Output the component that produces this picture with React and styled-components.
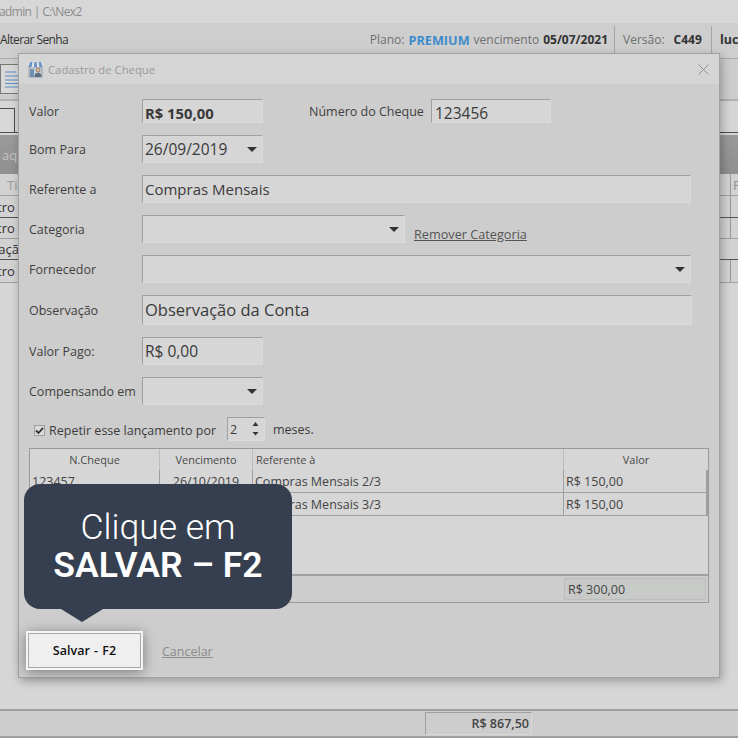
import React from 'react'
import styled, { createGlobalStyle } from 'styled-components'

const Global = createGlobalStyle`
  html, body { margin: 0; padding: 0; background: #d6d6d6; }
  * { box-sizing: border-box; }
`

const Screen = styled.div`
  position: relative;
  width: 738px;
  height: 738px;
  overflow: hidden;
  display: flex;
  flex-direction: column;
  background: #d6d6d6;
  font-family: "Open Sans", "Noto Sans", sans-serif;
  font-size: 13px;
  color: #3c3c3c;
`

const TitleBar = styled.div`
  height: 23px;
  flex: none;
  display: flex;
  align-items: center;
  margin-left: -1px;
  font-size: 12px;
  letter-spacing: -0.65px;
  color: #8c8c8c;
  background: #d7d7d7;
`

const MenuBar = styled.div`
  height: 36px;
  flex: none;
  display: flex;
  align-items: center;
  padding-bottom: 2px;
  background: #cecece;
  border-bottom: 1px solid #a9a9a9;
  white-space: nowrap;
`

const MenuItem = styled.div`
  font-size: 12px;
  letter-spacing: -0.6px;
  color: #333;
`

const PlanInfo = styled.div`
  margin-left: auto;
  height: 27px;
  display: flex;
  align-items: center;
  gap: 4px;
  padding-right: 6px;
  font-size: 12px;
  color: #6e6e6e;
  border-right: 1px solid #a5a5a5;
`

const Strong = styled.b`
  color: ${p => p.$color || '#333'};
  font-size: ${p => p.$size || 12}px;
  font-weight: 700;
`

const VersionInfo = styled(PlanInfo)`
  margin-left: 0;
  width: 97px;
  padding: 0 0 0 8px;
  gap: 9px;
`

const UserInfo = styled.div`
  width: 26px;
  overflow: hidden;
  padding-left: 8px;
  font-size: 12.5px;
  font-weight: 700;
  color: #333;
`

const ToolBar = styled.div`
  height: 42px;
  flex: none;
  display: flex;
  align-items: center;
  background: #cdcdcd;
  border-bottom: 2px solid #b0b0b0;
`

const ToolButton = styled.div`
  width: 30px;
  height: 30px;
  display: flex;
  align-items: center;
  padding-left: 3px;
  background: #d8d8d8;
  border: 1px solid #777;
`

const TabStrip = styled.div`
  height: 32px;
  flex: none;
  padding-top: 7px;
  background: #d6d6d6;
  border-bottom: 1px solid #4c4c4c;
`

const Tab = styled.div`
  width: 15px;
  height: 24px;
  border: 1px solid #4c4c4c;
  border-left: 0;
  border-bottom: 0;
  background: #d8d8d8;
`

const GridTitle = styled.div`
  height: 39px;
  flex: none;
  margin-top: 2px;
  display: flex;
  align-items: center;
  padding-left: 2px;
  font-size: 13px;
  color: #c4c4c4;
  background: linear-gradient(#9a9a9a, #8f8f8f);
`

const GridRow = styled.div`
  height: ${p => p.$h || 21}px;
  flex: none;
  display: grid;
  grid-template-columns: 60px 1fr 8px;
  background: #d2d2d2;
  border-bottom: 1px solid ${p => (p.$dark ? '#555' : '#a0a0a0')};
`

const ClipCell = styled.div`
  display: flex;
  align-items: center;
  overflow: visible;
  white-space: nowrap;
  margin-left: ${p => p.$offset || 0}px;
  font-size: 13px;
  color: ${p => (p.$muted ? '#9a9a9a' : '#333')};
`

const EndCell = styled.div`
  grid-column: 3;
  display: flex;
  align-items: center;
  padding-left: 2px;
  font-size: 13px;
  color: #8f8f8f;
  border-left: ${p => (p.$none ? 0 : '1px solid #999')};
`

const Desktop = styled.div`
  flex: 1;
`

const StatusBar = styled.div`
  height: 29px;
  flex: none;
  padding-left: 425px;
  background: #cdcdcd;
  border-top: 2px solid #a0a0a0;
  border-bottom: 2px solid #a0a0a0;
`

const StatusCell = styled.div`
  width: 107px;
  height: 23px;
  margin-top: 1px;
  padding-right: 2px;
  display: flex;
  align-items: center;
  justify-content: flex-end;
  font-size: 12.5px;
  font-weight: 600;
  color: #444;
  border: 1px solid #d8d8d8;
  border-top-color: #a0a0a0;
  border-left-color: #a0a0a0;
`

const Dialog = styled.div`
  position: absolute;
  left: 18px;
  top: 53px;
  width: 702px;
  height: 625px;
  display: flex;
  flex-direction: column;
  background: #cdcdcd;
  border: 1px solid #a3a3a3;
  box-shadow: 2px 3px 9px rgba(0, 0, 0, 0.28);
`

const DialogHead = styled.div`
  height: 30px;
  flex: none;
  display: flex;
  align-items: center;
  gap: 4px;
  padding: 0 10px 0 8px;
  background: #d5d5d5;
  font-size: 11.3px;
  color: #9a9a9a;
`

const CloseBtn = styled.svg`
  margin-left: auto;
  width: 11px;
  height: 11px;
`

const DialogBody = styled.div`
  flex: 1;
  display: flex;
  flex-direction: column;
  padding: 15px 10px 0;
`

const Fields = styled.div`
  display: flex;
  flex-direction: column;
  gap: 12px;
`

const Row = styled.div`
  height: ${p => p.$h}px;
  display: flex;
  align-items: center;
`

const Label = styled.div`
  width: ${p => p.$w || 113}px;
  margin-left: ${p => p.$gap || 0}px;
  flex: none;
  font-size: 12.5px;
  white-space: nowrap;
  color: #3f3f3f;
`

const Field = styled.div`
  width: ${p => p.$w}px;
  height: 100%;
  flex: none;
  display: flex;
  align-items: center;
  justify-content: space-between;
  padding: ${p => p.$top || 0}px 5px 0 ${p => p.$pad || 2}px;
  font-size: ${p => p.$size || 15.5}px;
  font-weight: ${p => (p.$bold ? 700 : 400)};
  color: #3a3a3a;
  background: #d6d6d6;
  border: 1px solid #dcdcdc;
  border-top: 1px solid #a0a0a0;
  border-left: 1px solid #a0a0a0;
`

const ObservationField = styled(Field)`
  padding-bottom: 2px;
`

const Caret = styled.span`
  width: 0;
  height: 0;
  border-left: 5px solid transparent;
  border-right: 5px solid transparent;
  border-top: 5px solid #333;
`

const RemoveLink = styled.a`
  margin: 9px 0 0 9px;
  font-size: 12.7px;
  color: #555;
  text-decoration: underline;
  white-space: nowrap;
`

const CancelLink = styled.a`
  margin-top: 2px;
  font-size: 12.5px;
  color: #8b8b8b;
  text-decoration: underline;
`

const RepeatBlock = styled.div`
  margin-top: 12px;
  display: flex;
  flex-direction: column;
  gap: 7px;
`

const RepeatRow = styled.div`
  height: 24px;
  display: flex;
  align-items: center;
  padding-left: 5px;
  font-size: 12.5px;
`

const RepeatText = styled.span`
  margin-top: 2px;
`

const Check = styled.span`
  width: 11px;
  height: 11px;
  flex: none;
  margin: 2px 4px 0 0;
  display: flex;
  align-items: center;
  justify-content: center;
  background: #dadada;
  border: 1px solid #a0a0a0;
`

const Spinner = styled.div`
  width: 38px;
  height: 24px;
  margin: 0 8px 0 11px;
  display: flex;
  align-items: center;
  justify-content: space-between;
  padding: 0 5px 0 2px;
  font-size: 12.5px;
  background: #d6d6d6;
  border: 1px solid #dcdcdc;
  border-top-color: #a0a0a0;
  border-left-color: #a0a0a0;
`

const Table = styled.div`
  width: 680px;
  height: 155px;
  display: flex;
  flex-direction: column;
  background: #d6d6d6;
  border: 1px solid #999;
`

const TableRow = styled.div`
  height: ${p => p.$h}px;
  flex: none;
  display: grid;
  grid-template-columns: 130px 93px 311px 1fr;
  border-bottom: ${p => (p.$line ? '1px solid #a0a0a0' : 0)};
`

const Th = styled.div`
  display: flex;
  align-items: center;
  justify-content: ${p => (p.$left ? 'flex-start' : 'center')};
  padding-left: ${p => (p.$left ? 3 : 0)}px;
  font-size: 11px;
  color: #4a4a4a;
  border-right: 1px solid #bdbdbd;
  &:last-child { border-right: 0; }
`

const Td = styled.div`
  display: flex;
  align-items: center;
  justify-content: ${p => (p.$center ? 'center' : 'flex-start')};
  padding-left: ${p => (p.$center ? 0 : 2)}px;
  font-size: 12.5px;
  color: #444;
  border-right: 1px solid #a0a0a0;
  &:last-child { border-right: 2px solid #a0a0a0; }
`

const TableEmpty = styled.div`
  flex: 1;
`

const TableFoot = styled.div`
  height: 28px;
  flex: none;
  display: flex;
  justify-content: flex-end;
  padding: 2px 2px 2px 0;
  background: #cdcdcd;
  border-top: 2px solid #a0a0a0;
`

const Total = styled.div`
  width: 142px;
  display: flex;
  align-items: center;
  padding-left: 3px;
  font-size: 12.5px;
  color: #444;
  background: #c8cac8;
  border: 1px solid #bdbdbd;
`

const Actions = styled.div`
  margin: 28px 0 0 -3px;
  display: flex;
  align-items: center;
  gap: 19px;
`

const SaveButton = styled.div`
  width: 117px;
  height: 39px;
  display: flex;
  align-items: center;
  justify-content: center;
  font-size: 12.5px;
  font-weight: 600;
  word-spacing: 1px;
  color: #111;
  background: #efefef;
  border: 3px solid #f6f6f6;
  outline: 1px solid #a8a8a8;
  outline-offset: -3px;
  box-shadow: 0 2px 12px rgba(0, 0, 0, 0.4);
`

const Callout = styled.div`
  position: absolute;
  left: 24px;
  top: 484px;
  width: 268px;
  height: 125px;
  display: flex;
  flex-direction: column;
  align-items: center;
  justify-content: center;
  padding-bottom: 2px;
  background: #363f4f;
  border-radius: 16px;
  color: #fff;
  font-family: Roboto, "Open Sans", sans-serif;
  font-size: 35.5px;
  line-height: 38px;
  &::after {
    content: "";
    position: absolute;
    left: 37px;
    top: 100%;
    border-left: 21px solid transparent;
    border-right: 21px solid transparent;
    border-top: 13px solid #363f4f;
  }
`

const CalloutLight = styled.div`
  font-weight: 300;
`

const CalloutBold = styled.div`
  font-weight: 600;
`

const StoreIcon = () => (
  <svg width="17" height="17" viewBox="0 0 17 17">
    <rect x="2" y="6" width="13" height="10" fill="#c9ced6" stroke="#7c8796" strokeWidth="0.7" />
    <path d="M2 1h13l1.500 5H.5z" fill="#e4e4e4" />
    <path d="M3 1h2.400L4.600 6H1.400zM7.300 1h2.400l.4 5H6.900zM11.600 1H14l1.600 5h-3.200z" fill="#6a94c9" />
    <rect x="3" y="8" width="4" height="8" fill="#6f8fb2" />
    <circle cx="11" cy="9" r="2" fill="#d9b48f" stroke="#555" strokeWidth="0.5" />
    <path d="M7.500 16c0-3 1.500-4.300 3.500-4.300s3.500 1.300 3.500 4.300z" fill="#5b6b80" />
  </svg>
)

const NotesIcon = () => (
  <svg width="22" height="18" viewBox="0 0 22 18" fill="none" stroke="#5c8cc4" strokeWidth="1.2">
    <path d="M1 2h11M1 6h13M1 10h15M1 13.500h15M1 17h15" />
    <path d="M14 6l5-4" stroke="#666" strokeWidth="2" />
  </svg>
)

const CheckMark = () => (
  <svg width="9" height="9" viewBox="0 0 9 9" fill="none" stroke="#333" strokeWidth="1.8">
    <path d="M1 4.500l2.500 2.500L8 1.800" />
  </svg>
)

const SpinArrows = () => (
  <svg width="7" height="16" viewBox="0 0 7 16" fill="#333">
    <path d="M3.500 1L6.500 5H.5zM.5 11h6l-3 3.500z" />
  </svg>
)

const installments = [
  { num: '123457', date: '26/10/2019', ref: 'Compras Mensais 2/3', value: 'R$ 150,00' },
  { num: '123458', date: '26/11/2019', ref: 'Compras Mensais 3/3', value: 'R$ 150,00' },
]

export default function App() {
  return (
    <Screen>
      <Global />
      <TitleBar>admin | C:\Nex2</TitleBar>
      <MenuBar>
        <MenuItem>Alterar Senha</MenuItem>
        <PlanInfo>
          Plano: <Strong $color="#3f8ccb" $size={12.7}>PREMIUM</Strong> vencimento <Strong>05/07/2021</Strong>
        </PlanInfo>
        <VersionInfo>
          Versão: <Strong>C449</Strong>
        </VersionInfo>
        <UserInfo>lucas</UserInfo>
      </MenuBar>
      <ToolBar>
        <ToolButton><NotesIcon /></ToolButton>
      </ToolBar>
      <TabStrip><Tab /></TabStrip>
      <GridTitle>aq</GridTitle>
      <GridRow $h={22}>
        <ClipCell $muted $offset={7}>Tipo</ClipCell>
        <EndCell>F</EndCell>
      </GridRow>
      <GridRow $h={22} $dark><ClipCell $offset={-21}>Outro</ClipCell><EndCell /></GridRow>
      <GridRow><ClipCell $offset={-21}>Outro</ClipCell><EndCell /></GridRow>
      <GridRow $dark><ClipCell $offset={-63}>Movimentação</ClipCell><EndCell $none /></GridRow>
      <GridRow $h={23}><ClipCell $offset={-21}>Outro</ClipCell><EndCell /></GridRow>
      <Desktop />
      <StatusBar>
        <StatusCell>R$ 867,50</StatusCell>
      </StatusBar>

      <Dialog>
        <DialogHead>
          <StoreIcon />
          Cadastro de Cheque
          <CloseBtn viewBox="0 0 11 11" fill="none" stroke="#8e8e8e" strokeWidth="1">
            <path d="M.5.5l10 10M10.500.5l-10 10" />
          </CloseBtn>
        </DialogHead>
        <DialogBody>
          <Fields>
            <Row $h={24}>
              <Label>Valor</Label>
              <Field $w={121} $bold $size={14.8} $top={3}>R$ 150,00</Field>
              <Label $w={122} $gap={46}>Número do Cheque</Label>
              <Field $w={120} $pad={3} $top={3}>123456</Field>
            </Row>
            <Row $h={28}>
              <Label>Bom Para</Label>
              <Field $w={121}>26/09/2019<Caret /></Field>
            </Row>
            <Row $h={28}>
              <Label>Referente a</Label>
              <Field $w={549} $size={15}>Compras Mensais</Field>
            </Row>
            <Row $h={28}>
              <Label>Categoria</Label>
              <Field $w={263}><span /><Caret /></Field>
              <RemoveLink>Remover Categoria</RemoveLink>
            </Row>
            <Row $h={28}>
              <Label>Fornecedor</Label>
              <Field $w={549}><span /><Caret /></Field>
            </Row>
            <Row $h={30}>
              <Label>Observação</Label>
              <ObservationField $w={550} $size={16.5}>Observação da Conta</ObservationField>
            </Row>
            <Row $h={28}>
              <Label>Valor Pago:</Label>
              <Field $w={121}>R$ 0,00</Field>
            </Row>
            <Row $h={28}>
              <Label>Compensando em</Label>
              <Field $w={121}><span /><Caret /></Field>
            </Row>
          </Fields>
          <RepeatBlock>
            <RepeatRow>
              <Check><CheckMark /></Check>
              <RepeatText>Repetir esse lançamento por</RepeatText>
              <Spinner>2<SpinArrows /></Spinner>
              meses.
            </RepeatRow>
            <Table>
              <TableRow $h={21}>
                <Th>N.Cheque</Th>
                <Th>Vencimento</Th>
                <Th $left>Referente à</Th>
                <Th>Valor</Th>
              </TableRow>
              {installments.map(row => (
                <TableRow $h={23} $line key={row.num}>
                  <Td>{row.num}</Td>
                  <Td $center>{row.date}</Td>
                  <Td>{row.ref}</Td>
                  <Td>{row.value}</Td>
                </TableRow>
              ))}
              <TableEmpty />
              <TableFoot>
                <Total>R$ 300,00</Total>
              </TableFoot>
            </Table>
          </RepeatBlock>
          <Actions>
            <SaveButton>Salvar - F2</SaveButton>
            <CancelLink>Cancelar</CancelLink>
          </Actions>
        </DialogBody>
      </Dialog>

      <Callout>
        <CalloutLight>Clique em</CalloutLight>
        <CalloutBold>SALVAR – F2</CalloutBold>
      </Callout>
    </Screen>
  )
}
